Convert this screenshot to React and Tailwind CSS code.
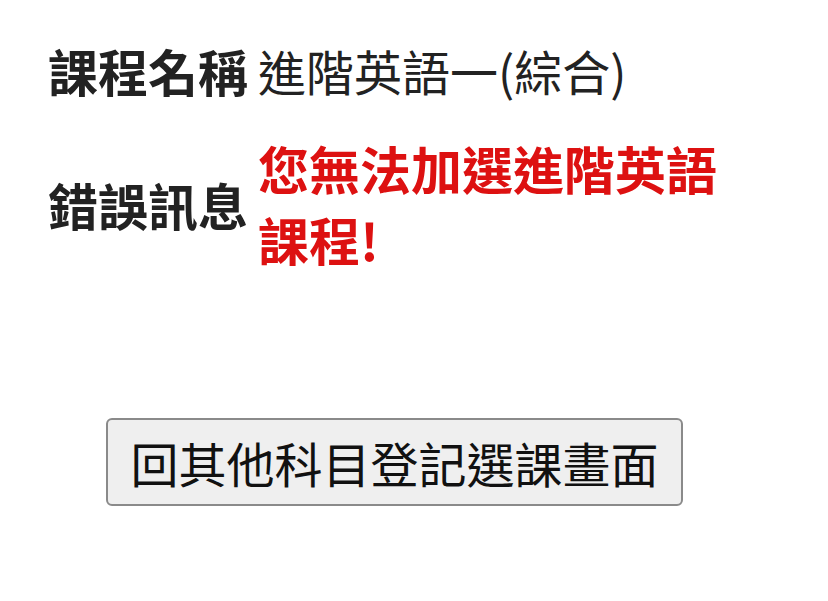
export default function App() {
  const font = { fontFamily: '"Noto Sans CJK TC", "Noto Sans CJK SC", sans-serif' };
  return (
    <div className="min-h-screen bg-white pl-[48px] pt-[34px]" style={font}>
      <div className="flex items-center leading-[72px]">
        <div className="w-[200px] text-[50px] font-bold text-[#222]">課程名稱</div>
        <div className="ml-[10px] text-[48px] text-[#222]">進階英語一(綜合)</div>
      </div>
      <div className="mt-[27px] flex items-center leading-[72px]">
        <div className="w-[200px] text-[50px] font-bold text-[#222]">錯誤訊息</div>
        <div className="ml-[10px] w-[470px] text-[51px] leading-[71px] font-bold text-[#dd1111]">您無法加選進階英語課程!</div>
      </div>
      <div className="mt-[143px] ml-[58px]">
        <button className="w-[577px] h-[88px] rounded-[6px] border-2 border-[#8a8a8a] bg-[#efefef] text-[48px] leading-none text-[#111]">
          回其他科目登記選課畫面
        </button>
      </div>
    </div>
  );
}
